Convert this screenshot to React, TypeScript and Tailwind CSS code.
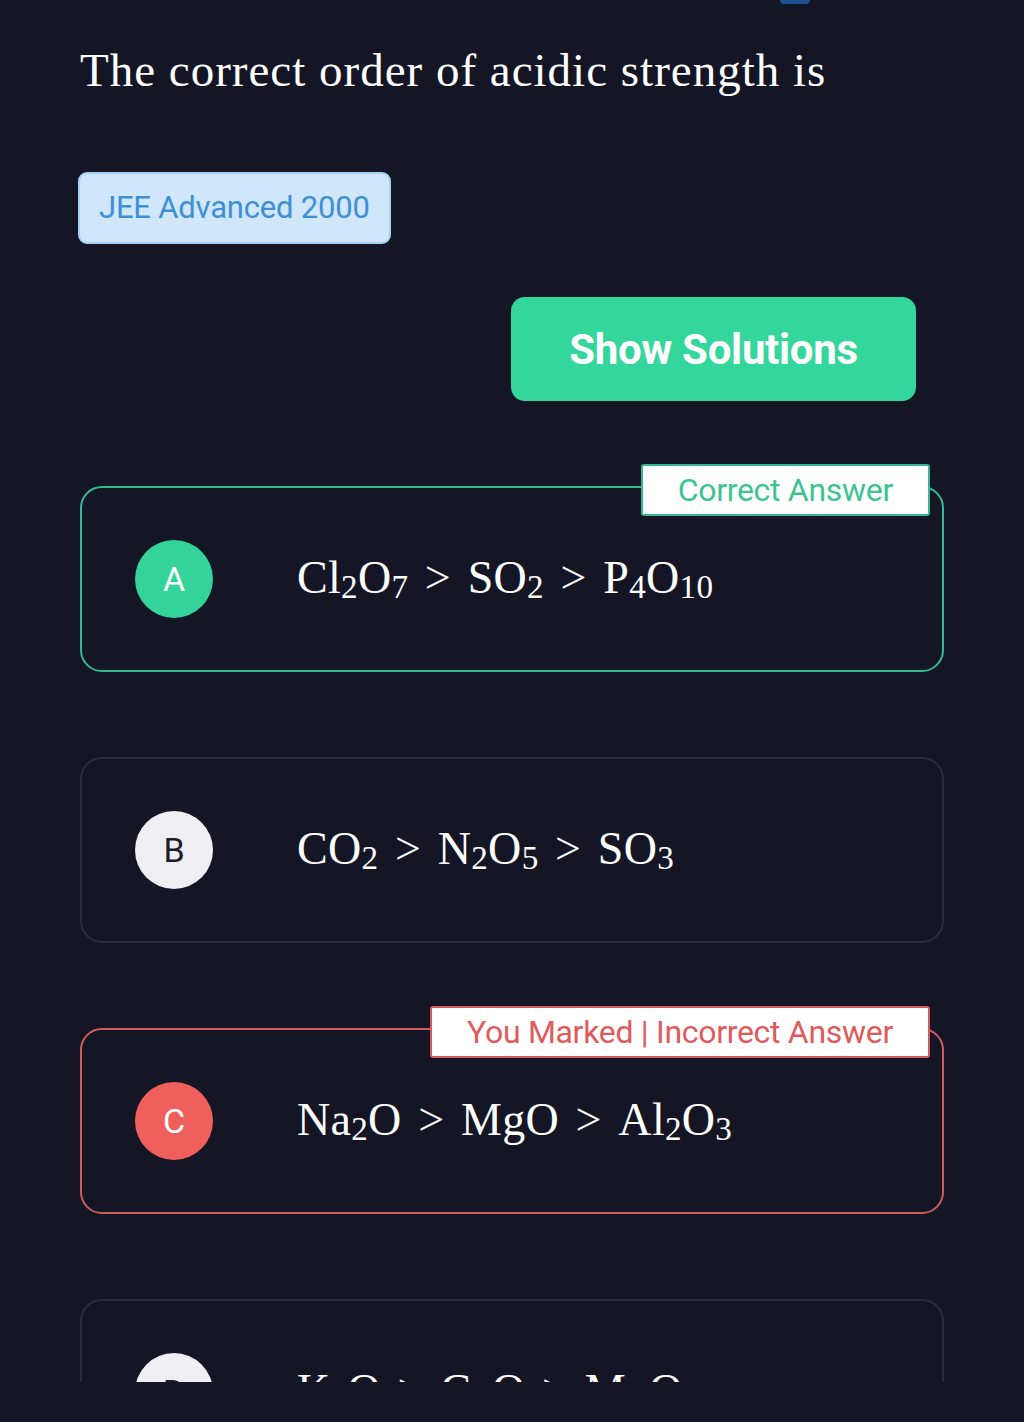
import React from "react";

const Sub = ({ children }: { children: React.ReactNode }) => (
  <span className="text-[0.72em] align-[-0.16em]">{children}</span>
);

const Gt = () => <span className="mx-[0.36em]">&gt;</span>;

type Variant = "correct" | "neutral" | "wrong";

const Option = ({
  letter,
  variant,
  children,
  badge,
}: {
  letter: string;
  variant: Variant;
  children: React.ReactNode;
  badge?: string;
}) => {
  const border =
    variant === "correct"
      ? "border-[#34b894]"
      : variant === "wrong"
      ? "border-[#cf5d5f]"
      : "border-[#2a2d3f]";
  const circle =
    variant === "correct"
      ? "bg-[#34d399] text-white"
      : variant === "wrong"
      ? "bg-[#ef5f5b] text-white"
      : "bg-[#eeeef3] text-[#1a1c28]";
  const badgeCls =
    variant === "correct"
      ? "border-[#34b894] text-[#3cc48f]"
      : "border-[#cf5d5f] text-[#e05a5c]";
  return (
    <div
      className={`relative h-[186px] rounded-[22px] border-2 ${border} flex items-center pl-[53px]`}
    >
      {badge && (
        <div
          className={`absolute right-[12px] top-[-24px] h-[52px] bg-white border-2 ${badgeCls} rounded-[3px] flex items-center px-[35px] text-[32px] tracking-[-0.3px] font-['Roboto',sans-serif] whitespace-nowrap`}
        >
          {badge}
        </div>
      )}
      <div
        className={`w-[78px] h-[78px] rounded-full ${circle} flex items-center justify-center text-[34px] font-['Roboto',sans-serif] shrink-0`}
      >
        {letter}
      </div>
      <div className="ml-[84px] text-[46px] tracking-[0.3px] text-white font-['Liberation_Serif',serif] leading-none whitespace-nowrap">
        {children}
      </div>
    </div>
  );
};

export default function App() {
  return (
    <div className="relative w-[1024px] h-[1422px] bg-[#141626] overflow-hidden">
      <div className="absolute left-[780px] top-[-8px] w-[30px] h-[12px] rounded-[4px] bg-[#1d4f8f]" />
      <div className="h-[1382px] overflow-hidden px-[80px] pt-[42px]">
        <h1 className="text-[47px] leading-[56px] text-white font-['Liberation_Serif',serif] tracking-[1px] whitespace-nowrap">
          The correct order of acidic strength is
        </h1>
        <div className="mt-[74px] flex">
          <div className="h-[72px] -ml-[2px] px-[19px] rounded-[9px] bg-[#cfe6fb] border-2 border-[#a8d0f2] flex items-center text-[31px] tracking-[-0.2px] text-[#3f8fd4] font-['Roboto',sans-serif] whitespace-nowrap">
            JEE Advanced 2000
          </div>
        </div>
        <div className="mt-[53px] flex justify-end pr-[28px]">
          <div className="w-[405px] h-[104px] rounded-[14px] bg-[#33d69b] flex items-center justify-center text-[42px] font-bold text-white font-['Roboto',sans-serif] tracking-[-0.3px]">
            Show Solutions
          </div>
        </div>
        <div className="mt-[85px] flex flex-col gap-[85px]">
          <Option letter="A" variant="correct" badge="Correct Answer">
            Cl<Sub>2</Sub>O<Sub>7</Sub>
            <Gt />
            SO<Sub>2</Sub>
            <Gt />P<Sub>4</Sub>O<Sub>10</Sub>
          </Option>
          <Option letter="B" variant="neutral">
            CO<Sub>2</Sub>
            <Gt />N<Sub>2</Sub>O<Sub>5</Sub>
            <Gt />
            SO<Sub>3</Sub>
          </Option>
          <Option letter="C" variant="wrong" badge="You Marked | Incorrect Answer">
            Na<Sub>2</Sub>O<Gt />MgO<Gt />Al<Sub>2</Sub>O<Sub>3</Sub>
          </Option>
          <Option letter="D" variant="neutral">
            K<Sub>2</Sub>O<Gt />CaO<Gt />MgO
          </Option>
        </div>
      </div>
    </div>
  );
}
